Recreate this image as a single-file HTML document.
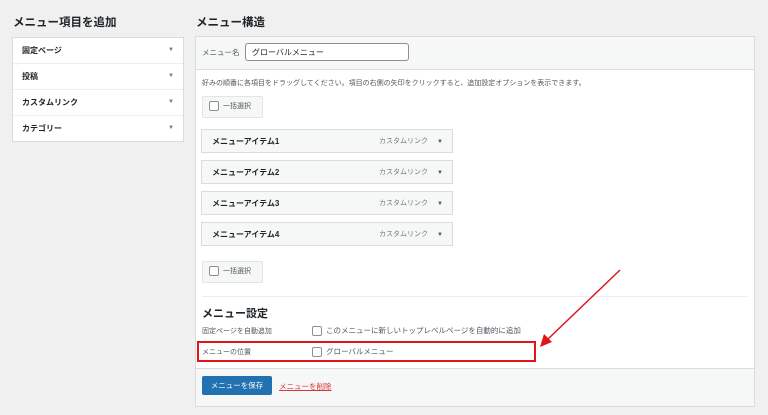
<!DOCTYPE html><html><head><meta charset="utf-8"><style>
body{margin:0;width:768px;height:415px;background:#f0f0f1;font-family:"Liberation Sans","Noto Sans CJK JP",sans-serif;color:#1d2327;position:relative;overflow:hidden}
.a{position:absolute}
h2{position:absolute;margin:0;font-size:11.5px;font-weight:bold}
.lp{left:12px;top:37px;width:170px;background:#fff;border:1px solid #dcdcde}
.lp div{height:25px;border-bottom:1px solid #eee;font-size:8px;font-weight:bold;line-height:25px;padding-left:9px;position:relative}
.lp div:last-child{border:none}
.tri{position:absolute;right:9px;font-size:6px;color:#777}
.rp{left:195px;top:36px;width:560px;height:371px;background:#fff;border:1px solid #dcdcde;box-sizing:border-box}
.s{font-size:7.5px;color:#50575e}
.btn{background:#f6f7f7;border:1px solid #e2e4e7;border-radius:2px;font-size:7px;color:#50575e;line-height:20px;padding-left:6px}
.cb{display:inline-block;width:8px;height:8px;border:1px solid #8c8f94;border-radius:2px;vertical-align:middle;margin-right:4px;background:#fff}
.it{left:201px;width:252px;height:24px;background:#f6f7f7;border:1px solid #dcdcde;font-size:8px;font-weight:bold;line-height:24px;box-sizing:border-box;padding-left:10px}
.it span{position:absolute;right:24px;font-weight:normal;font-size:7px;color:#777}
.it i{position:absolute;right:9px;font-style:normal;font-size:6px;color:#555}
</style></head><body>
<h2 style="left:13px;top:14px">メニュー項目を追加</h2>
<h2 style="left:196px;top:14px">メニュー構造</h2>
<div class="a lp"><div>固定ページ<span class="tri">▼</span></div><div>投稿<span class="tri">▼</span></div><div>カスタムリンク<span class="tri">▼</span></div><div>カテゴリー<span class="tri">▼</span></div></div>
<div class="a rp"></div>
<div class="a" style="left:196px;top:37px;width:558px;height:32px;background:#f6f7f7;border-bottom:1px solid #dcdcde"></div>
<div class="a s" style="left:202px;top:47px">メニュー名</div>
<div class="a" style="left:245px;top:43px;width:164px;height:18px;border:1px solid #8c8f94;border-radius:3px;background:#fff;font-size:8px;line-height:18px;padding-left:6px;box-sizing:border-box">グローバルメニュー</div>
<div class="a s" style="left:202px;top:78px;font-size:7px">好みの順番に各項目をドラッグしてください。項目の右側の矢印をクリックすると、追加設定オプションを表示できます。</div>
<div class="a btn" style="left:202px;top:96px;width:53px;height:20px"><span class="cb"></span>一括選択</div>
<div class="a it" style="top:129px">メニューアイテム1<span>カスタムリンク</span><i>▼</i></div>
<div class="a it" style="top:160px">メニューアイテム2<span>カスタムリンク</span><i>▼</i></div>
<div class="a it" style="top:191px">メニューアイテム3<span>カスタムリンク</span><i>▼</i></div>
<div class="a it" style="top:222px">メニューアイテム4<span>カスタムリンク</span><i>▼</i></div>
<div class="a btn" style="left:202px;top:261px;width:53px;height:20px"><span class="cb"></span>一括選択</div>
<div class="a" style="left:202px;top:296px;width:546px;border-top:1px solid #eee"></div>
<div class="a" style="left:202px;top:305px;font-size:11px;font-weight:bold">メニュー設定</div>
<div class="a s" style="left:202px;top:326px;font-size:7px">固定ページを自動追加</div>
<div class="a s" style="left:312px;top:325px;font-size:7.5px"><span class="cb"></span>このメニューに新しいトップレベルページを自動的に追加</div>
<div class="a s" style="left:202px;top:347px;font-size:7px">メニューの位置</div>
<div class="a s" style="left:312px;top:346px;font-size:7.5px"><span class="cb"></span>グローバルメニュー</div>
<div class="a" style="left:197px;top:341px;width:339px;height:21px;border:2px solid #e0151b;box-sizing:border-box"></div>
<div class="a" style="left:196px;top:368px;width:558px;height:37px;background:#f6f7f7;border-top:1px solid #dcdcde"></div>
<div class="a" style="left:202px;top:376px;width:70px;height:19px;background:#2271b1;border-radius:2px;color:#fff;font-size:7.5px;line-height:19px;text-align:center">メニューを保存</div>
<div class="a" style="left:279px;top:381px;font-size:7.5px;color:#d63638;text-decoration:underline">メニューを削除</div>
<svg class="a" style="left:0;top:0" width="768" height="415"><line x1="620" y1="270" x2="548" y2="339" stroke="#e0151b" stroke-width="1.5"/><polygon points="540,347 544,334 552,342" fill="#e0151b"/></svg>
</body></html>
